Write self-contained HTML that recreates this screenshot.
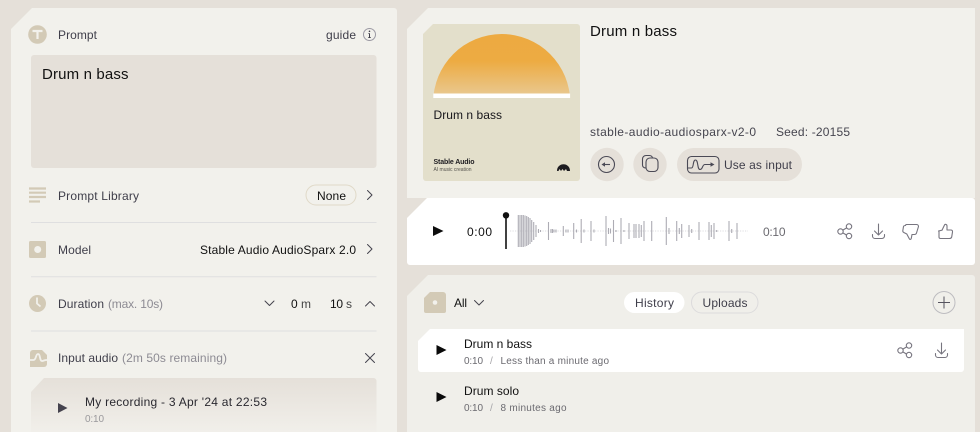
<!DOCTYPE html>
<html><head><meta charset="utf-8"><style>
html,body{margin:0;padding:0;background:#e5e0d9;width:980px;height:432px;overflow:hidden}
svg{display:block;filter:blur(.35px)}
text{font-family:"Liberation Sans",sans-serif;font-size:12px;fill:#3f3e4a}
.k{fill:#111}
.g{fill:#8d8b93}
.s{font-size:10px;fill:#6b6a70}
.i{fill:none;stroke:#77757f;stroke-width:1.100;stroke-linecap:round;stroke-linejoin:round}
.c{fill:none;stroke:#45444e;stroke-width:1;stroke-linecap:round;stroke-linejoin:round}
</style></head><body>
<svg width="980" height="432" viewBox="0 0 980 432" xmlns="http://www.w3.org/2000/svg">
<defs>
<linearGradient id="sun" x1="0" y1="34" x2="0" y2="94" gradientUnits="userSpaceOnUse"><stop offset="0" stop-color="#edaa41"/><stop offset=".45" stop-color="#edab42"/><stop offset="1" stop-color="#e9c78d"/></linearGradient>
<linearGradient id="rec" x1="0" y1="378" x2="0" y2="432" gradientUnits="userSpaceOnUse"><stop offset="0" stop-color="#e5e0d9"/><stop offset="1" stop-color="#f1efea"/></linearGradient>
<clipPath id="sc"><rect x="430" y="30" width="145" height="63.500"/></clipPath>
</defs>
<rect x="-5" y="-5" width="990" height="442" fill="#e5e0d9"/>

<!-- left panel -->
<path d="M11 29L32 8H394a3 3 0 0 1 3 3V440H11Z" fill="#f2f1ec"/>
<circle cx="37.500" cy="34.500" r="9.300" fill="#d3cab6"/>
<path d="M32.500 31h10M37.500 31v8" stroke="#f2f1ec" stroke-width="2.200" fill="none"/>
<text x="58" y="39" textLength="39">Prompt</text>
<text x="326" y="39" textLength="30">guide</text>
<circle cx="369.500" cy="34.500" r="6" fill="none" stroke="#9b99a3" stroke-width="1"/>
<path d="M369.500 33.500v4M368.300 37.500h2.400M368.500 33.500h1" stroke="#3f3e4a" stroke-width="1" fill="none"/><circle cx="369.500" cy="31.300" r=".8" fill="#3f3e4a"/>
<rect x="31" y="55" width="345.500" height="113" rx="3" fill="#e5e0d9"/>
<text x="42" y="79" textLength="86.500" class="k" style="font-size:15px">Drum n bass</text>

<path d="M29 188.500h17M29 192.700h17M29 197h17" stroke="#d3cab6" stroke-width="2.200" fill="none"/><path d="M29 201.500h11" stroke="#d3cab6" stroke-width="2.200" fill="none"/>
<text x="58" y="200" textLength="81">Prompt Library</text>
<rect x="306" y="185" width="50" height="20" rx="10" fill="#f2f1ec" stroke="#e0d9c8" stroke-width="1"/>
<text x="317" y="200" textLength="29" class="k">None</text>
<path class="c" d="M367.500 190.500l4.500 4.500-4.500 4.500"/>
<path d="M31 222.500h345.500" stroke="#dfdfe0" fill="none"/>

<rect x="29" y="241" width="17" height="17" rx="1.500" fill="#d3cab6"/><circle cx="37.700" cy="249.500" r="3.500" fill="#f2f1ec"/>
<text x="58" y="254" textLength="33">Model</text>
<text x="200" y="254" textLength="156" class="k">Stable Audio AudioSparx 2.0</text>
<path class="c" d="M367.500 244.500l4.500 4.500-4.500 4.500"/>
<path d="M31 276.700h345.500" stroke="#dfdfe0" fill="none"/>

<circle cx="37.500" cy="303.500" r="8.500" fill="#d3cab6"/><path d="M37 297.500v6l3.500 3" stroke="#f2f1ec" stroke-width="1.800" fill="none"/>
<text x="58" y="308" textLength="46">Duration</text>
<text x="108" y="308" textLength="55" class="g">(max. 10s)</text>
<path class="c" d="M265 301l4.500 4.500 4.500-4.500"/>
<text x="291" y="308" textLength="8" class="k">0</text><text x="301" y="308" textLength="9.500" style="fill:#444">m</text>
<text x="330" y="308" textLength="13" class="k">10</text><text x="346" y="308" textLength="5.500" style="fill:#444">s</text>
<path class="c" d="M365.500 306l4.500-4.500 4.500 4.500"/>
<path d="M31 331h345.500" stroke="#dfdfe0" fill="none"/>

<path d="M33 350H42L47 355V364a3 3 0 0 1-3 3H30V353a3 3 0 0 1 3-3Z" fill="#d3cab6"/>
<path d="M30 360h3.500c3 0 2-6 4.500-6s1.500 7 4 7c1.500 0 2-1 5-1" stroke="#f2f1ec" stroke-width="1.800" fill="none"/>
<text x="58" y="362" textLength="60">Input audio</text>
<text x="122" y="362" textLength="105" class="g">(2m 50s remaining)</text>
<path class="c" d="M365.500 353.500l9 9M374.500 353.500l-9 9"/>

<path d="M31 392L44 378H373.500a3 3 0 0 1 3 3V440H31Z" fill="url(#rec)"/>
<path d="M58 403l9.500 5-9.500 5Z" fill="#45434e"/>
<text x="85" y="406" textLength="182" style="fill:#2a2930">My recording - 3 Apr '24 at 22:53</text>
<text x="85" y="422" textLength="19" style="font-size:10px;fill:#9a999c">0:10</text>

<!-- right top panel -->
<path d="M407 29L428 8H985V198H407Z" fill="#f2f1ec"/>
<rect x="975" y="0" width="10" height="440" fill="#e5e0d9"/>
<path d="M423 34L433 24H577a3 3 0 0 1 3 3V178a3 3 0 0 1-3 3H426a3 3 0 0 1-3-3Z" fill="#e3dfcb"/>
<circle cx="501.700" cy="102.500" r="68.500" fill="url(#sun)" clip-path="url(#sc)"/>
<rect x="433.300" y="93.500" width="136.800" height="4.500" fill="#fff"/>
<text x="433.500" y="119" textLength="68.500" style="fill:#16151a;font-size:12px">Drum n bass</text>
<text x="433.500" y="164" textLength="41" style="font-size:7px;font-weight:700;fill:#1d1c20">Stable Audio</text>
<text x="433.500" y="171.200" textLength="38" style="font-size:5px;fill:#56544e">AI music creation</text>
<path d="M557 171c0-9 13-9 13 0h-3l-1-2-2 2-1.500-2-1.500 2-1.500-2-1 2Z" fill="#1d1c20"/>

<text x="590" y="36" textLength="87" class="k" style="font-size:15px">Drum n bass</text>
<text x="590" y="136" textLength="166" style="fill:#46454f">stable-audio-audiosparx-v2-0</text>
<text x="776" y="136" textLength="74" style="fill:#46454f">Seed: -20155</text>

<circle cx="607" cy="164.500" r="16.700" fill="#e5e0d9"/>
<circle cx="606.500" cy="164.500" r="8" fill="none" stroke="#4b4a56" stroke-width="1.100"/>
<path d="M603 164.500h7" stroke="#4b4a56" stroke-width="1.100" fill="none"/><path d="M601.500 164.500l3.500-2.300v4.600Z" fill="#4b4a56"/>
<circle cx="650" cy="164.500" r="16.700" fill="#e5e0d9"/>
<path d="M646 168h-.5a3 3 0 0 1-3-3v-6a3.500 3.500 0 0 1 3.500-3.500h3.500a3.500 3.500 0 0 1 3 2" fill="none" stroke="#4b4a56" stroke-width="1.100"/>
<rect x="646" y="158" width="12" height="13.500" rx="4" fill="none" stroke="#4b4a56" stroke-width="1.100"/>
<rect x="677" y="148" width="125" height="33" rx="16.500" fill="#e5e0d9"/>
<rect x="687.500" y="156.500" width="31.500" height="16.500" rx="4" fill="none" stroke="#4b4a56" stroke-width="1.100"/>
<path d="M688 168h3.500c2.500 0 1-8 4-8s1.500 9.500 4.500 9.500c3 0 2-5 5-5h6" fill="none" stroke="#4b4a56" stroke-width="1.100"/><path d="M714.500 164.500l-4-2.300v4.600Z" fill="#4b4a56"/>
<text x="724" y="169" textLength="68">Use as input</text>

<!-- player -->
<path d="M407 218L427 198H972a3 3 0 0 1 3 3V262a3 3 0 0 1-3 3H410a3 3 0 0 1-3-3Z" fill="#fff"/>
<path d="M433 226l10.500 5-10.500 5Z" fill="#0d0d0d"/>
<text x="467" y="236" textLength="25" class="k">0:00</text>
<path d="M510 231H748" stroke="#d2d1d6" stroke-width=".8" stroke-dasharray="1.200 1.300" fill="none"/>
<g stroke="#adacb4" stroke-width="1.100" fill="none">
<path d="M518.300 215v32M520 215v32M521.700 215v32M523.300 215v32M525 215.500v31M526.700 216v30M528.300 217v28M530 218v26M531.700 220v22M533.700 222v18"/>
<path d="M536 225v12M538.500 229v4M540.500 230v2M548.500 222v18M551 229v4M552.500 229v4M554 229.500v3M556 229.500v3M563.300 226v10M566 229.500v3M568 229.500v3M573.700 223v16M576.500 229.500v3M581.200 219v24M584 229.500v3M591 221v20M594 229.500v3"/>
<path d="M606 216v30M608.500 228v6M610.500 228.500v5M613.500 220v22M616 230v2M621 218v26M624 230v2M629 223v16M634 224v14M636 224v14M639 224v14M641.300 225v12M644 221v20M651.700 221v20M666.300 217v28M669 228v6M676.700 221v20M679.300 228v6M681.700 224v14M689 225v12M691.700 229v4M699 222v18M709 222v18M711.300 225v12M714 223v16M716.700 230v2M729 221v20M731.700 229v4M737 223v16"/>
</g>
<path d="M506 215v34" stroke="#111" stroke-width="1.600" fill="none"/><circle cx="506" cy="215.300" r="3.200" fill="#111"/>
<text x="763" y="236" textLength="22.500" style="fill:#6b6a70">0:10</text>

<g class="i">
<circle cx="840.500" cy="231.500" r="2.700"/><circle cx="849" cy="226.500" r="2.700"/><circle cx="849" cy="236" r="2.700"/><path d="M843 230l3.500-2M843 233l3.500 2"/>
<path d="M878.500 224v11M874.500 231l4 4 4-4M872.500 234.500v1.500a2.500 2.500 0 0 0 2.500 2.500h7a2.500 2.500 0 0 0 2.500-2.500v-1.500"/>
<path d="M906 224.500h10.500c1 0 2 .8 2 2l-2 6.500c-.3 1-1 1.500-2 1.500h-2.500l-.7 3.800c-.2 1.200-1.500 1.500-2 .5l-2.500-4.800-3-1.500c-.8-.4-1.100-1-1-1.800l.7-4.200c.2-.6 1-1 2-1Z"/>
<path d="M939 231.500v5.500c0 1 .8 1.500 1.500 1.500h9c1.200 0 1.900-.7 2.200-1.500l.8-5c.2-1.300-.5-2-1.700-2h-3.800v-4c0-1.600-2-2.200-2.500-1l-2.500 5.200-3.500 .8Z"/>
</g>

<!-- bottom panel -->
<path d="M407 296L428 275H972a3 3 0 0 1 3 3V440H407Z" fill="#f0efea"/>
<path d="M424 298L430 292H443a3 3 0 0 1 3 3V311a2 2 0 0 1-2 2H426a2 2 0 0 1-2-2Z" fill="#d3cab6"/>
<circle cx="435" cy="302.500" r="2.300" fill="#f2f1ec"/>
<text x="454" y="307" textLength="13" class="k">All</text>
<path class="c" d="M474.500 300.500l4.500 4.500 4.500-4.500"/>
<rect x="624" y="292" width="60.500" height="21" rx="10.500" fill="#fff"/>
<text x="635" y="307" textLength="39">History</text>
<rect x="691.500" y="292" width="66.500" height="21" rx="10.500" fill="none" stroke="#dcdbdc"/>
<text x="702.500" y="307" textLength="45">Uploads</text>
<circle cx="944" cy="302.500" r="11" fill="none" stroke="#bdbcc0"/>
<path d="M944 296.500v12M938 302.500h12" stroke="#55535e" stroke-width="1" fill="none"/>

<path d="M418 341L430 329H964V369a3 3 0 0 1-3 3H421a3 3 0 0 1-3-3Z" fill="#fff"/>
<path d="M436.500 345l10 5-10 5Z" fill="#0a0a0a"/>
<text x="464" y="348" textLength="68" class="k">Drum n bass</text>
<text x="464" y="364" textLength="19" class="s">0:10</text>
<text x="490" y="364" textLength="3.500" style="font-size:10px;fill:#a5a4a8">/</text>
<text x="500.500" y="364" textLength="108.500" class="s">Less than a minute ago</text>
<g class="i">
<circle cx="900.500" cy="350.500" r="2.700"/><circle cx="909" cy="345.500" r="2.700"/><circle cx="909" cy="355" r="2.700"/><path d="M903 349l3.500-2M903 352l3.500 2"/>
<path d="M941.500 343v11M937.500 350l4 4 4-4M935.500 353.500v1.500a2.500 2.500 0 0 0 2.500 2.500h7a2.500 2.500 0 0 0 2.500-2.500v-1.500"/>
</g>

<path d="M436.500 392l10 5-10 5Z" fill="#0a0a0a"/>
<text x="464" y="395" textLength="55" class="k">Drum solo</text>
<text x="464" y="411" textLength="19" class="s">0:10</text>
<text x="490" y="411" textLength="3.500" style="font-size:10px;fill:#a5a4a8">/</text>
<text x="500.500" y="411" textLength="66" class="s">8 minutes ago</text>
</svg>
</body></html>
